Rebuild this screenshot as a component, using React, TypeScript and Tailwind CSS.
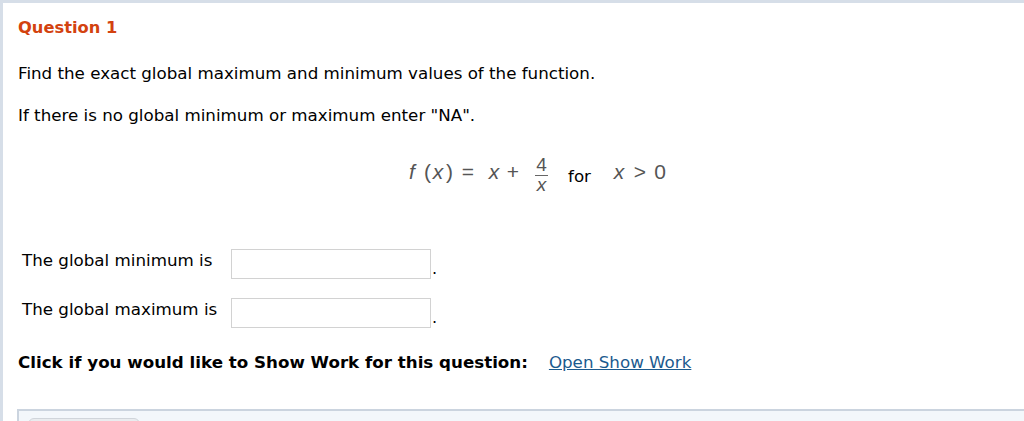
const mathFont = { fontFamily: '"Liberation Sans", Arial, sans-serif' }

function Row({ label }: { label: string }) {
  return (
    <div className="flex items-start">
      <span className="w-[209px] text-[16.7px] leading-[20px] pt-[1px] whitespace-nowrap">{label}</span>
      <input className="w-[200px] h-[30px] border border-[#d2d2d2] bg-white outline-none" />
      <span className="text-[16px] leading-none mt-[12px] ml-[1px]">.</span>
    </div>
  )
}

export default function App() {
  return (
    <div
      className="w-[1024px] h-[421px] overflow-hidden bg-white text-black"
      style={{ fontFamily: '"DejaVu Sans", Verdana, sans-serif' }}
    >
      <div className="border-t-[3px] border-l-[3px] border-[#d6dee8] h-full pl-[15px] pt-[15px]">
        <h2 className="text-[16.3px] font-bold text-[#d3420f] leading-[20px]">Question 1</h2>

        <p className="mt-[25px] text-[16.7px] leading-[20px] whitespace-nowrap">
          Find the exact global maximum and minimum values of the function.
        </p>
        <p className="mt-[22px] text-[16.7px] leading-[20px] whitespace-nowrap">
          If there is no global minimum or maximum enter "NA".
        </p>

        {/* formula */}
        <div className="mt-[27px] flex items-center pl-[382px] h-[40px] text-[#555]" style={mathFont}>
          <span className="w-[24px] text-center text-[21px] italic">f</span>
          <span className="w-[6px] text-center text-[21px]">(</span>
          <span className="w-[16px] text-center text-[21px] italic">x</span>
          <span className="w-[5px] text-center text-[21px]">)</span>
          <span className="w-[34px] text-center text-[21px]">=</span>
          <span className="w-[18px] text-center text-[21px] italic">x</span>
          <span className="w-[20px] text-center text-[21px]">+</span>
          <span className="w-[37px] flex flex-col items-center leading-none mt-[4px]">
            <span className="text-[19px] leading-[16px]">4</span>
            <span className="h-px w-[13px] bg-[#666] my-[2px]"></span>
            <span className="text-[19px] leading-[14px] italic">x</span>
          </span>
          <span
            className="w-[39px] text-center text-[16.7px] mt-[10px] text-black"
            style={{ fontFamily: '"DejaVu Sans", Verdana, sans-serif' }}
          >
            for
          </span>
          <span className="w-[8px]"></span>
          <span className="w-[24px] text-center text-[21px] italic">x</span>
          <span className="w-[18px] text-center text-[21px]">&gt;</span>
          <span className="w-[22px] text-center text-[21px]">0</span>
        </div>

        <div className="mt-[57px] flex flex-col gap-[19px] pl-[4px]">
          <Row label="The global minimum is" />
          <Row label="The global maximum is" />
        </div>

        <div className="mt-[24px] flex items-center text-[16.7px] leading-[20px] whitespace-nowrap">
          <span className="font-bold">Click if you would like to Show Work for this question:</span>
          <a href="#" className="ml-[21px] text-[#1b5a8e] underline">Open Show Work</a>
        </div>

        <div className="mt-[37px] ml-[-1px] border-t-[2px] border-l-[2px] border-[#cbd4df] bg-[#f3f7fb] h-[40px] pl-[9px] pt-[7px]">
          <div className="w-[112px] h-[20px] rounded-[6px] border border-[#d0d5db] bg-[#e9ecef]"></div>
        </div>
      </div>
    </div>
  )
}
